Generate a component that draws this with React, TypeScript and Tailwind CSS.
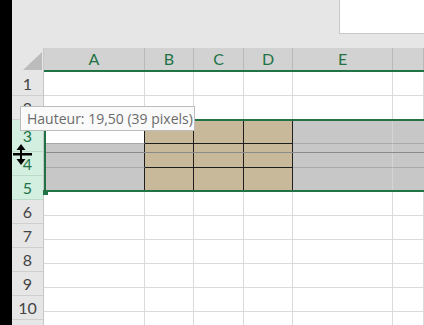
import React from 'react';

// column widths are written out so Tailwind picks them up
const columns = [
  { name: 'A', w: 'w-[101px]' },
  { name: 'B', w: 'w-[49px]' },
  { name: 'C', w: 'w-[50px]' },
  { name: 'D', w: 'w-[49px]' },
  { name: 'E', w: 'w-[100px]' },
  { name: '', w: 'w-[31px]' },
];

const rowHeaders = [
  { n: '1', h: 'h-[24px]', sel: false },
  { n: '2', h: 'h-[24px]', sel: false },
  { n: '3', h: 'h-[32px]', sel: true },
  { n: '4', h: 'h-[24px]', sel: true },
  { n: '5', h: 'h-[24px]', sel: true },
  { n: '6', h: 'h-[24px]', sel: false },
  { n: '7', h: 'h-[24px]', sel: false },
  { n: '8', h: 'h-[24px]', sel: false },
  { n: '9', h: 'h-[24px]', sel: false },
  { n: '10', h: 'h-[24px]', sel: false },
  { n: '', h: 'h-[24px]', sel: false },
];

const GREEN = 'text-[#217346]';

const PlainRow: React.FC = () => (
  <div className="flex h-[24px] shrink-0">
    {columns.map((c, i) => (
      <div key={i} className={`${c.w} shrink-0 border-r border-b border-[#dadada] bg-white`} />
    ))}
  </div>
);

// one row of the selected block: A / beige B-D / gray E+
const SelRow: React.FC<{ active?: boolean }> = ({ active }) => (
  <div className="flex h-[24px] shrink-0">
    <div
      className={`w-[101px] shrink-0 border-r border-r-[#1e1e1e] border-b border-b-[#a9a9a9] ${
        active ? 'bg-white' : 'bg-[#c7c7c7]'
      }`}
    />
    <div className="w-[49px] shrink-0 bg-[#c9b99b] border-r border-b border-[#1e1e1e]" />
    <div className="w-[50px] shrink-0 bg-[#c9b99b] border-r border-b border-[#1e1e1e]" />
    <div className="w-[49px] shrink-0 bg-[#c9b99b] border-r border-b border-[#1e1e1e]" />
    <div className="w-[100px] shrink-0 bg-[#c7c7c7] border-r border-r-[#d4d4d4] border-b border-b-[#a9a9a9]" />
    <div className="w-[31px] shrink-0 bg-[#c7c7c7] border-b border-b-[#a9a9a9]" />
  </div>
);

const App: React.FC = () => {
  return (
    <div
      className="relative w-[424px] h-[325px] overflow-hidden flex bg-white"
      style={{ fontFamily: 'Lato, "Open Sans", sans-serif' }}
    >
      {/* dark strip on the left */}
      <div className="w-[12px] shrink-0 bg-black" />

      <div className="flex-1 flex flex-col min-w-0">
        {/* ribbon / formula area */}
        <div className="h-[48px] shrink-0 bg-[#e6e6e6] flex justify-end items-start">
          <div className="w-[85px] h-[34px] bg-white border-l border-b border-[#c8c8c8]" />
        </div>

        {/* column headers */}
        <div className="h-[24px] shrink-0 flex">
          <div className="w-[32px] shrink-0 bg-[#e6e6e6] border-r border-[#c8c8c8] flex items-end justify-end pr-[1px] pb-[2px]">
            <svg width="19" height="18" viewBox="0 0 19 18">
              <polygon points="19,0 19,18 0,18" fill="#bcbcbc" />
            </svg>
          </div>
          <div className="flex-1 flex border-b-2 border-[#217346] bg-[#d2d2d2]">
            {columns.map((c, i) => (
              <div
                key={i}
                className={`${c.w} shrink-0 border-r border-[#b9b9b9] flex items-center justify-center text-[16px] ${GREEN}`}
              >
                {c.name}
              </div>
            ))}
          </div>
        </div>

        {/* body */}
        <div className="flex-1 flex min-h-0">
          {/* row headers */}
          <div className="w-[32px] shrink-0 flex flex-col border-r border-[#c6c6c6]">
            {rowHeaders.map((r, i) => (
              <div
                key={i}
                className={`${r.h} shrink-0 flex items-center justify-center text-[16px] border-b ${
                  r.sel
                    ? 'bg-[#d3efe0] text-[#217346] border-[#bcdccb]'
                    : 'bg-[#e6e6e6] text-[#444444] border-[#cfcfcf]'
                }`}
              >
                {r.n}
              </div>
            ))}
          </div>

          {/* cells */}
          <div className="flex-1 flex flex-col min-w-0">
            <PlainRow />
            <PlainRow />

            <div className="relative flex flex-col shrink-0">
              <SelRow active />
              <SelRow />
              <SelRow />
              {/* row-height drag preview */}
              <div className="absolute left-0 right-0 top-[32px] h-px bg-[#8a8a8a]" />
              {/* selection outline */}
              <div className="absolute -top-[1px] left-0 right-0 bottom-0 border-t-2 border-l-2 border-b-2 border-[#217346]" />
              <div className="absolute -left-[1px] -bottom-[3px] w-[5px] h-[5px] bg-[#217346]" />
            </div>

            <PlainRow />
            <PlainRow />
            <PlainRow />
            <PlainRow />
            <PlainRow />
            <PlainRow />
          </div>
        </div>
      </div>

      {/* tooltip */}
      <div
        className="absolute left-[20px] top-[106px] w-[175px] h-[25px] bg-[#fafafa] border border-[#bdbdbd] flex items-center pl-[6px] text-[14px] text-[#6b6b6b] whitespace-nowrap"
        style={{ fontFamily: '"Open Sans", sans-serif' }}
      >
        Hauteur: 19,50 (39 pixels)
      </div>

      {/* resize cursor */}
      <svg className="absolute left-[12px] top-[143px]" width="21" height="23" viewBox="0 0 21 23">
        <line x1="9" y1="4" x2="9" y2="19" stroke="#000" strokeWidth="2" />
        <polygon points="9,1 4.5,7 13.5,7" fill="#000" />
        <polygon points="9,22 4.5,16 13.5,16" fill="#000" />
        <rect x="1" y="10" width="19" height="2.5" fill="#000" />
      </svg>
    </div>
  );
};

export default App;
